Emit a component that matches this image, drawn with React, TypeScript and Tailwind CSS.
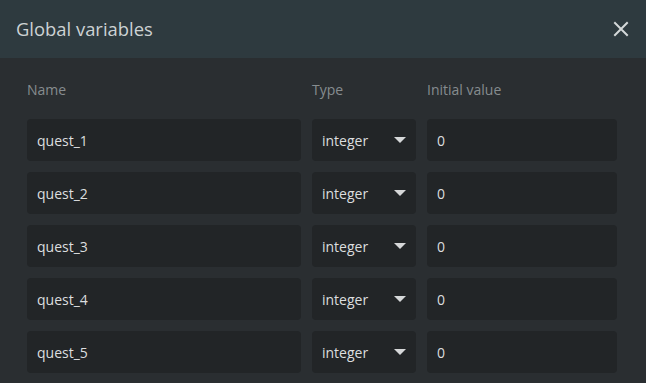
import React from "react";

const rows = ["quest_1", "quest_2", "quest_3", "quest_4", "quest_5"];

function Caret() {
  return (
    <svg width="12" height="6" viewBox="0 0 12 6" className="shrink-0">
      <path d="M0 0 H12 L6 6 Z" fill="#d6d8d9" />
    </svg>
  );
}

function CloseIcon() {
  return (
    <svg width="16" height="16" viewBox="0 0 16 16">
      <path d="M2 2 L14 14 M14 2 L2 14" stroke="#d4d8d9" strokeWidth="2" strokeLinecap="square" />
    </svg>
  );
}

export default function App() {
  return (
    <div
      className="flex h-[383px] w-[646px] flex-col overflow-hidden bg-[#2a2e31]"
      style={{ fontFamily: '"Open Sans", "Noto Sans", sans-serif' }}
    >
      <div className="flex h-[58px] shrink-0 items-center justify-between bg-[#2e3a3f] pl-4 pr-[13px]">
        <h1 className="text-[18.4px] text-[#cdd2d4]">Global variables</h1>
        <button className="flex h-6 w-6 items-center justify-center">
          <CloseIcon />
        </button>
      </div>

      <div className="px-[27px] pt-[21px]">
        <div className="flex h-[20px] items-center text-[14px] text-[#868c8f]">
          <span className="w-[285px]">Name</span>
          <span className="w-[115px]">Type</span>
          <span>Initial value</span>
        </div>

        <div className="mt-[20px] flex flex-col gap-[11px]">
          {rows.map((name) => (
            <div key={name} className="flex h-[42px] gap-[11px] text-[14px] text-[#dcdedf]">
              <div className="flex w-[274px] items-center rounded bg-[#222527] px-[10px] pt-px">{name}</div>
              <div className="flex w-[104px] items-center justify-between rounded bg-[#222527] pl-[10px] pr-[10px]">
                <span className="pt-px">integer</span>
                <Caret />
              </div>
              <div className="flex w-[190px] items-center rounded bg-[#222527] px-[10px] pt-px">0</div>
            </div>
          ))}
        </div>
      </div>
    </div>
  );
}
